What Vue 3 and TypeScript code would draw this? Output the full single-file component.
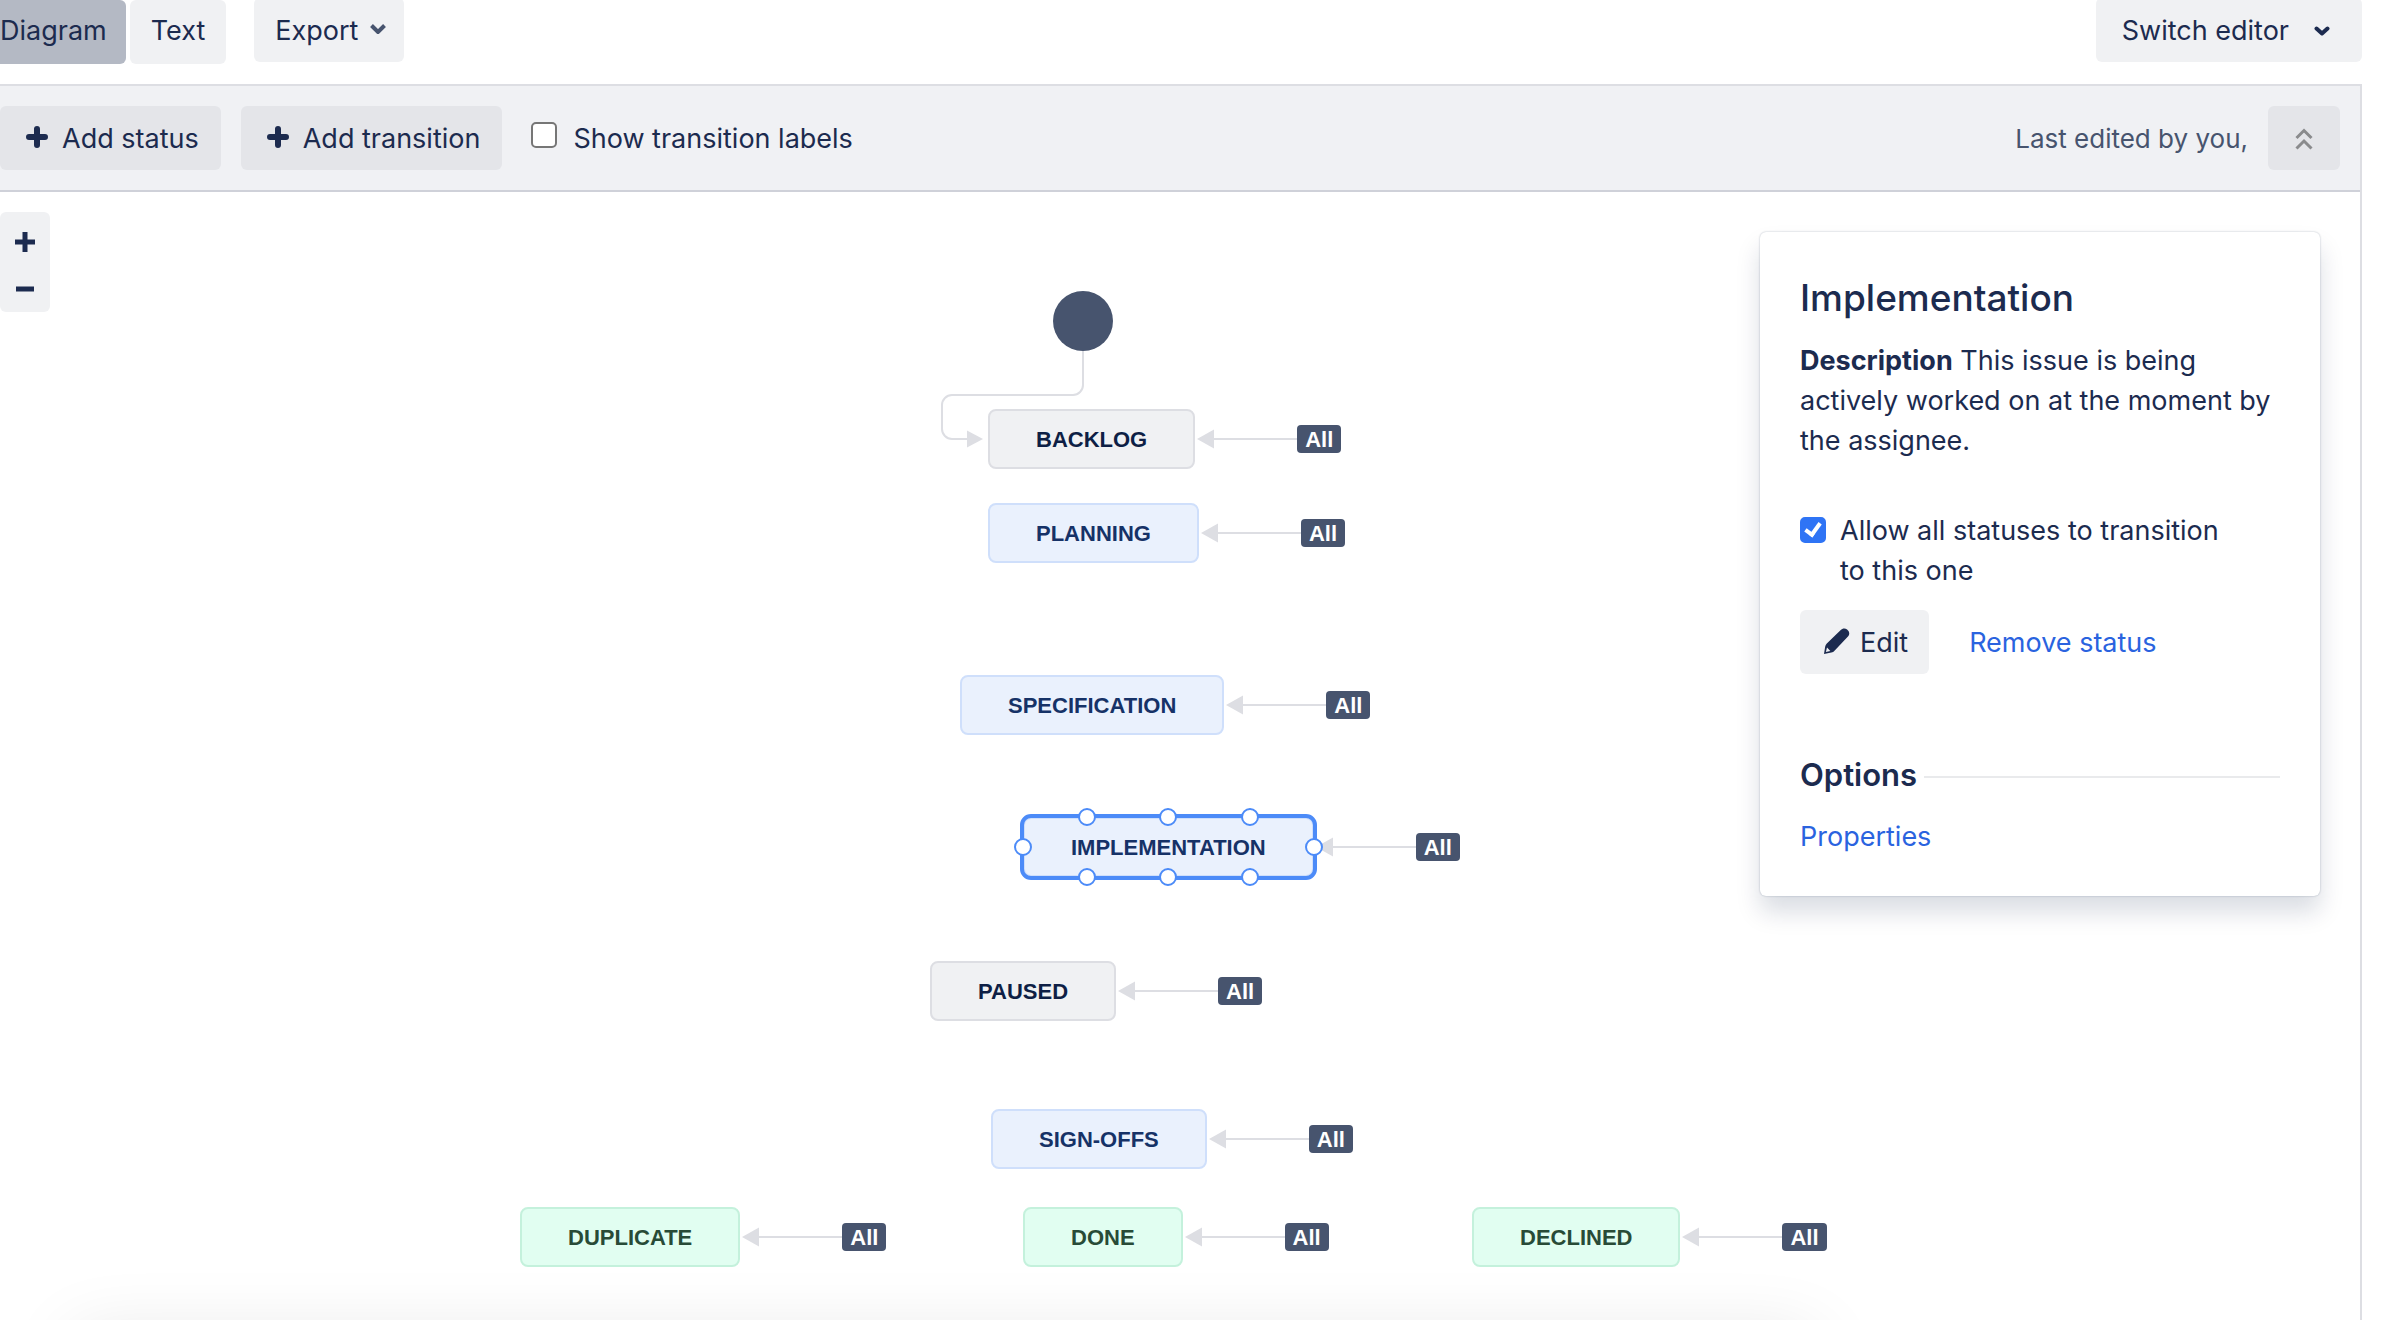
<script setup lang="ts">
import { ref } from 'vue'

type Category = 'todo' | 'progress' | 'done'

interface StatusNode {
  name: string
  category: Category
  x: number
  y: number
  selected?: boolean
}

const statuses: StatusNode[] = [
  { name: 'BACKLOG', category: 'todo', x: 988, y: 217 },
  { name: 'PLANNING', category: 'progress', x: 988, y: 311 },
  { name: 'SPECIFICATION', category: 'progress', x: 960, y: 483 },
  { name: 'IMPLEMENTATION', category: 'progress', x: 1023, y: 625, selected: true },
  { name: 'PAUSED', category: 'todo', x: 930, y: 769 },
  { name: 'SIGN-OFFS', category: 'progress', x: 991, y: 917 },
  { name: 'DUPLICATE', category: 'done', x: 520, y: 1015 },
  { name: 'DONE', category: 'done', x: 1023, y: 1015 },
  { name: 'DECLINED', category: 'done', x: 1472, y: 1015 },
]

const handles = ['n1', 'n2', 'n3', 's1', 's2', 's3', 'w', 'e']

const showLabels = ref(false)
const allowAll = ref(true)
</script>

<template>
  <div class="page">
    <header class="header">
      <div class="modes">
        <button type="button" class="btn mode active">Diagram</button>
        <button type="button" class="btn mode">Text</button>
      </div>
      <button type="button" class="btn export">
        Export
        <svg class="chevron soft" viewBox="0 0 16 10" aria-hidden="true"><path d="M1.5 1.5 8 8l6.500-6.500" /></svg>
      </button>
      <button type="button" class="btn switch">
        Switch editor
        <svg class="chevron round" viewBox="0 0 16 10" aria-hidden="true"><path d="M2.500 2.500 8 7.500l5.500-5" /></svg>
      </button>
    </header>

    <main class="panel">
      <div class="toolbar">
        <button type="button" class="btn tool">
          <svg class="plus" viewBox="0 0 22 22" aria-hidden="true"><path d="M11 3v16M3 11h16" /></svg>
          Add status
        </button>
        <button type="button" class="btn tool">
          <svg class="plus" viewBox="0 0 22 22" aria-hidden="true"><path d="M11 3v16M3 11h16" /></svg>
          Add transition
        </button>
        <label class="show-labels">
          <input v-model="showLabels" type="checkbox" class="check" />
          Show transition labels
        </label>
        <span class="edited">Last edited by you,</span>
        <button type="button" class="btn collapse" aria-label="Collapse">
          <svg viewBox="0 0 18 22" aria-hidden="true"><path d="M1.500 10 9 2.500l7.500 7.500M1.500 20.500 9 13l7.500 7.500" /></svg>
        </button>
      </div>

      <div class="canvas">
        <div class="zoom">
          <button type="button" aria-label="Zoom in">
            <svg viewBox="0 0 20 20" aria-hidden="true"><path d="M10 0v20M0 10h20" /></svg>
          </button>
          <button type="button" aria-label="Zoom out">
            <svg viewBox="0 0 20 20" aria-hidden="true"><path d="M1 10h18" /></svg>
          </button>
        </div>

        <svg class="initial" viewBox="0 0 180 180" aria-hidden="true">
          <path class="wire" d="M143 80v34a10 10 0 0 1-10 10H12a10 10 0 0 0-10 10v24a10 10 0 0 0 10 10h16" />
          <path class="tip" d="M27 159.500v17L43 168z" />
          <circle cx="143" cy="50" r="30" />
        </svg>

        <div
          v-for="s in statuses"
          :key="s.name"
          class="status"
          :style="{ left: s.x + 'px', top: s.y + 'px' }"
        >
          <div class="node" :class="[s.category, { selected: s.selected }]">
            {{ s.name }}
            <template v-if="s.selected">
              <i v-for="h in handles" :key="h" class="handle" :class="h"></i>
            </template>
          </div>
          <svg class="link" viewBox="0 0 102 20" aria-hidden="true">
            <path class="wire" d="M18 10h84" />
            <path class="tip" d="M19 0.500v19L2 10z" />
          </svg>
          <span class="all">All</span>
        </div>

        <aside class="details">
          <h2>Implementation</h2>
          <p><strong>Description</strong> This issue is being actively worked on at the moment by the assignee.</p>
          <label class="allow">
            <input v-model="allowAll" type="checkbox" class="check" />
            <span>Allow all statuses to transition to this one</span>
          </label>
          <div class="actions">
            <button type="button" class="btn edit">
              <svg viewBox="0 0 26 26" aria-hidden="true">
                <path d="M16.500 2.200c2-2 4.500-2.400 6.600-.7 2.300 1.900 2.900 4.500 1.100 6.700L10.500 22.800c-1 1-1.800 1.500-3.100 1.800L0 26l1.200-7.600c.2-1.200.7-2 1.600-3z" />
                <path class="nib" d="M3 19.500 6.300 23l-4.400 1z" />
              </svg>
              Edit
            </button>
            <a href="#remove">Remove status</a>
          </div>
          <h3>Options</h3>
          <a href="#properties">Properties</a>
        </aside>
      </div>
    </main>
  </div>
</template>

<style>
body {
  margin: 0;
  background: #fff;
}
</style>

<style scoped>
.page {
  position: relative;
  display: flex;
  flex-direction: column;
  min-height: 100vh;
  overflow: hidden;
  color: #1c2b4f;
  font: 27px/40px Inter, "Liberation Sans", sans-serif;
}

.page::after {
  content: "";
  position: absolute;
  top: calc(100% + 14px);
  left: 70px;
  right: 24%;
  height: 60px;
  border-radius: 20px;
  box-shadow: 0 0 70px rgba(0, 0, 0, 0.1);
}

.btn {
  display: flex;
  align-items: center;
  box-sizing: border-box;
  height: 64px;
  padding: 2px 21px 0;
  border: 0;
  border-radius: 6px;
  background: #f0f1f3;
  color: inherit;
  font: inherit;
  white-space: nowrap;
}

.header {
  display: flex;
  align-items: flex-start;
  gap: 28px;
  margin-top: -2px;
  padding: 0 30px 20px 0;
}

.modes {
  display: flex;
  gap: 4px;
  margin: 2px 0 0 -20px;
}

.mode {
  padding: 0 21px 2px;
}

.active {
  padding-right: 19px;
  padding-left: 20px;
  background: #b4b9c4;
}

.export {
  gap: 12px;
  padding-right: 18px;
}

.switch {
  gap: 25px;
  margin-left: auto;
  padding-right: 32px;
  padding-left: 26px;
}

.chevron {
  width: 16px;
  height: 10px;
  fill: none;
  stroke: #1c2b4f;
  stroke-width: 4;
}

.soft {
  margin-bottom: 4px;
  stroke: #47546e;
}

.round {
  stroke-linecap: round;
  stroke-linejoin: round;
}

.panel {
  flex: 1;
  display: flex;
  flex-direction: column;
  margin-right: 30px;
  border: solid #dddee3;
  border-width: 2px 2px 0 0;
}

.toolbar {
  display: flex;
  align-items: center;
  padding: 20px 20px 20px 0;
  border-bottom: 2px solid #cfd1d9;
  background: #f0f1f4;
}

.tool,
.collapse {
  background: #e4e5e9;
}

.tool {
  gap: 14px;
  margin-right: 20px;
  padding-right: 22px;
  padding-left: 26px;
}

.plus {
  width: 22px;
  height: 22px;
  margin-bottom: 4px;
  fill: none;
  stroke: #1c2b4f;
  stroke-width: 6;
  stroke-linecap: round;
}

.check {
  position: relative;
  flex: none;
  box-sizing: border-box;
  width: 26px;
  height: 26px;
  margin: 0;
  appearance: none;
  border: 2px solid #767676;
  border-radius: 5px;
  background: #fff;
}

.check:checked {
  border-color: #2f74f5;
  background: #2f74f5;
}

.check:checked::before {
  content: "";
  position: absolute;
  top: 1px;
  left: 6px;
  width: 6px;
  height: 12px;
  border: solid #fff;
  border-width: 0 4px 4px 0;
  transform: rotate(36deg);
}

.show-labels {
  display: flex;
  gap: 16px;
  margin-left: 9px;
  padding-top: 2px;
}

.show-labels .check {
  margin-top: 3px;
}

.edited {
  margin-left: auto;
  padding-top: 2px;
  color: #47546e;
  font-size: 26px;
}

.collapse {
  justify-content: center;
  width: 72px;
  margin-left: 20px;
}

.collapse svg {
  width: 18px;
  height: 22px;
  fill: none;
  stroke: #8a8b8d;
  stroke-width: 3;
}

.canvas {
  position: relative;
  flex: 1;
  min-height: 1100px;
  padding-top: 20px;
}

.zoom {
  display: flex;
  flex-direction: column;
  gap: 4px;
  width: 50px;
  padding: 8px 0 2px;
  box-sizing: border-box;
  border-radius: 6px;
  background: #f0f1f3;
}

.zoom button {
  display: flex;
  align-items: center;
  justify-content: center;
  height: 43px;
  padding: 0;
  border: 0;
  background: none;
}

.zoom svg {
  width: 20px;
  height: 20px;
  stroke: #1c2b4f;
  stroke-width: 5;
}

.initial {
  position: absolute;
  top: 79px;
  left: 940px;
  width: 180px;
  height: 180px;
  fill: #47546e;
}

.wire {
  fill: none;
  stroke: #dddee3;
  stroke-width: 2;
}

.tip {
  fill: #dddee3;
}

.status {
  position: absolute;
  display: flex;
  align-items: center;
  font: bold 22px/28px "Liberation Sans", Arial, sans-serif;
}

.node {
  position: relative;
  padding: 15px 46px 13px;
  border: 2px solid #dddee3;
  border-radius: 8px;
  background: #f0f1f3;
  color: #0e1f45;
}

.progress {
  border-color: #cfdffb;
  background: #eaf1fd;
  color: #163267;
}

.done {
  border-color: #c4f1dc;
  background: #e1fef1;
  color: #284b37;
}

.selected {
  z-index: 1;
  outline: 4px solid #4c8bf8;
  outline-offset: -1px;
}

.handle {
  position: absolute;
  box-sizing: border-box;
  width: 18px;
  height: 18px;
  margin: -9px;
  border: 2px solid #4c8bf8;
  border-radius: 50%;
  background: #fff;
}

.n1, .n2, .n3 { top: -2px; }
.s1, .s2, .s3 { top: calc(100% + 2px); }
.n1, .s1 { left: 62px; }
.n2, .s2 { left: 50%; }
.n3, .s3 { left: calc(100% - 62px); }
.w { top: 50%; left: -2px; }
.e { top: 50%; left: calc(100% + 2px); }

.link {
  width: 102px;
  height: 20px;
}

.all {
  padding: 1px 8px 0;
  border-radius: 4px;
  background: #47546e;
  color: #fff;
  line-height: 27px;
}

.details {
  position: absolute;
  top: 40px;
  right: 40px;
  box-sizing: border-box;
  width: 560px;
  padding: 41px 40px 39px;
  border-radius: 6px;
  background: #fff;
  box-shadow: 0 0 2px rgba(9, 30, 66, 0.3), 0 16px 24px rgba(9, 30, 66, 0.15);
}

h2 {
  margin: 0 0 18px;
  font-size: 37px;
  font-weight: 500;
  line-height: 50px;
}

p {
  margin: 0 0 50px;
}

.allow {
  display: flex;
  gap: 14px;
  margin-bottom: 19px;
  padding-right: 40px;
}

.allow .check {
  margin-top: 6px;
}

.actions {
  display: flex;
  align-items: center;
  gap: 40px;
  margin-bottom: 81px;
}

.actions a {
  padding-top: 2px;
}

.edit {
  gap: 10px;
  padding-left: 24px;
}

.edit svg {
  width: 26px;
  height: 26px;
  margin-bottom: 4px;
  fill: #1c2b4f;
}

.edit .nib {
  fill: #f0f1f3;
}

a {
  color: #2a63df;
  text-decoration: none;
}

h3 {
  display: flex;
  align-items: center;
  gap: 7px;
  margin: 0 0 22px;
  font-size: 31px;
  font-weight: 600;
}

h3::after {
  content: "";
  flex: 1;
  height: 2px;
  margin-top: 4px;
  background: #e9eaec;
}
</style>
